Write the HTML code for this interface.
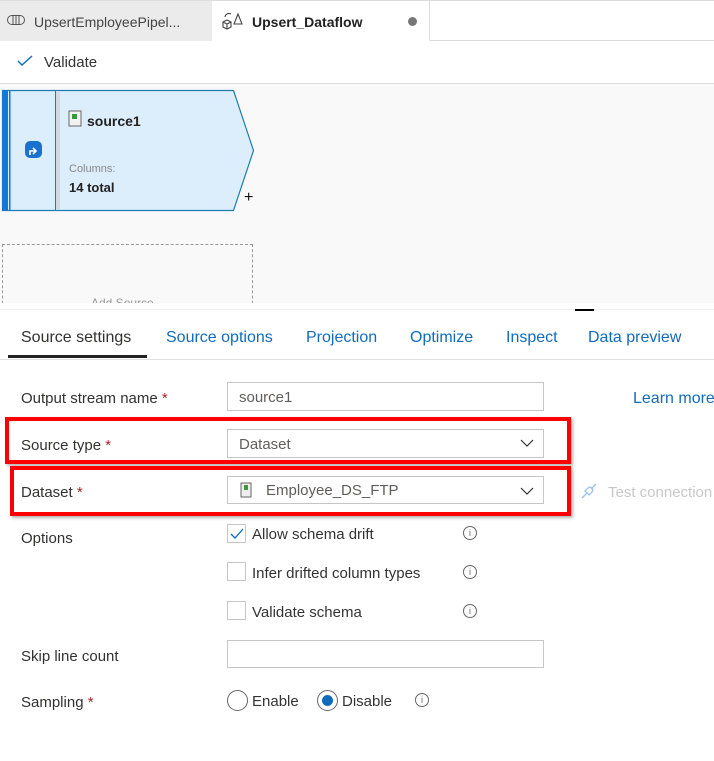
<!DOCTYPE html>
<html><head><meta charset="utf-8"><style>
*{margin:0;padding:0;box-sizing:border-box}
body{width:714px;height:761px;overflow:hidden;background:#fff;font-family:"Liberation Sans",sans-serif;color:#323130;position:relative}
.a{position:absolute;white-space:nowrap}
.lbl{font-size:15px;color:#323130}
.st{color:#a4262c}
.inp{position:absolute;border:1px solid #c8c6c4;background:#fff;font-size:15px;color:#605e5c;padding-left:11px}
.tab{font-size:16px;color:#0f6cbd;top:329px}
.cb{position:absolute;width:19px;height:19px;border:1px solid #c8c6c4;background:#fff}
.info{position:absolute;width:14px;height:14px;border:1px solid #666;border-radius:50%;font-size:9px;line-height:12px;text-align:center;color:#666}
</style></head><body>
<div class="a" style="left:0;top:0;width:714px;height:1px;background:#ddd"></div>
<div class="a" style="left:0;top:1px;width:212px;height:40px;background:#ebebeb"></div>
<div class="a" style="left:429px;top:1px;width:285px;height:40px;border-left:1px solid #ddd;border-bottom:1px solid #ddd"></div>
<svg class="a" style="left:7px;top:15px" width="18" height="10" fill="none" stroke="#555" stroke-width="1"><rect x="0.5" y="0.5" width="17" height="9" rx="4.5"/><line x1="6" y1="1" x2="6" y2="9"/><line x1="9" y1="1" x2="9" y2="9"/><line x1="12" y1="1" x2="12" y2="9"/></svg>
<div class="a" style="left:34px;top:14px;font-size:14px;color:#444">UpsertEmployeePipel...</div>
<svg class="a" style="left:221px;top:11px" width="22" height="20" viewBox="0 0 22 20" fill="none" stroke="#444" stroke-width="1.1"><path d="M2 11l4-2 4 2v5l-4 2-4-2z M2 11l4 2 4-2 M6 13v5"/><path d="M13 13l4-10 4 10z"/><path d="M4 6a4 4 0 0 1 6-3"/></svg>
<div class="a" style="left:252px;top:14px;font-size:14px;font-weight:bold;color:#222">Upsert_Dataflow</div>
<div class="a" style="left:408px;top:17px;width:9px;height:9px;border-radius:50%;background:#777"></div>
<svg class="a" style="left:17px;top:55px" width="16" height="12"><path d="M1 6l4 4 10-9" stroke="#0f6cbd" stroke-width="1.4" fill="none"/></svg>
<div class="a" style="left:44px;top:54px;font-size:15px;color:#333">Validate</div>
<div class="a" style="left:0;top:83px;width:714px;height:1px;background:#ddd"></div>
<div class="a" style="left:0;top:84px;width:714px;height:219px;background:#f9f9f9"></div>
<svg class="a" style="left:0;top:89px" width="262" height="124"><path d="M2.5 1.5H233.5L253.5 61.5L233.5 121.5H2.5Z" fill="#dcedfb" stroke="#1c7fb0" stroke-width="1.2"/><rect x="2" y="1" width="6" height="121" fill="#1478d4"/><rect x="9" y="1" width="1.5" height="121" fill="#1478d4"/><line x1="55.5" y1="2" x2="55.5" y2="121" stroke="#1c7fb0"/><rect x="56" y="2" width="4" height="119" fill="#cfdbe5"/><rect x="25" y="52" width="17" height="17" rx="5" fill="#1a72d0"/><path d="M30 66v-4h6M33 59l3 3-3 3" stroke="#fff" stroke-width="1.6" fill="none"/><rect x="69" y="22" width="12" height="15" fill="#f2f2f2" stroke="#666"/><rect x="72" y="25" width="5" height="5" fill="#3a9a3a"/></svg>
<div class="a" style="left:87px;top:113px;font-size:14px;font-weight:bold;color:#222">source1</div>
<div class="a" style="left:69px;top:163px;font-size:11px;color:#888">Columns:</div>
<div class="a" style="left:69px;top:180px;font-size:13px;font-weight:bold;color:#222">14 total</div>
<div class="a" style="left:244px;top:189px;font-size:16px;color:#111">+</div>
<div class="a" style="left:2px;top:244px;width:251px;height:70px;border:1px dashed #999"></div>
<div class="a" style="left:91px;top:296px;font-size:12px;color:#999">Add Source</div>
<div class="a" style="left:0;top:303px;width:714px;height:458px;background:#fff"></div>
<div class="a" style="left:0;top:309px;width:714px;height:1px;background:#eee"></div>
<div class="a" style="left:575px;top:309px;width:19px;height:2px;background:#000"></div>
<div class="a tab" style="left:21px;color:#323130">Source settings</div>
<div class="a tab" style="left:166px">Source options</div>
<div class="a tab" style="left:306px">Projection</div>
<div class="a tab" style="left:410px">Optimize</div>
<div class="a tab" style="left:506px">Inspect</div>
<div class="a tab" style="left:588px">Data preview</div>
<div class="a" style="left:0;top:359px;width:714px;height:1px;background:#e1e1e1"></div>
<div class="a" style="left:8px;top:355px;width:139px;height:3px;background:#222"></div>

<div class="a lbl" style="left:21px;top:390px">Output stream name <span class="st">*</span></div>
<div class="inp" style="left:227px;top:382px;width:317px;height:29px;line-height:29px">source1</div>
<div class="a" style="left:633px;top:390px;font-size:16px;color:#0f6cbd">Learn more</div>

<div class="a" style="left:5px;top:417px;width:566px;height:47px;border:4px solid #f00;box-shadow:2px 2px 3px rgba(0,0,0,.3)"></div>
<div class="a lbl" style="left:21px;top:437px">Source type <span class="st">*</span></div>
<div class="inp" style="left:227px;top:429px;width:317px;height:29px;line-height:29px">Dataset</div>
<svg class="a" style="left:520px;top:439px" width="14" height="9"><path d="M1 1l6 6 6-6" stroke="#333" stroke-width="1.2" fill="none"/></svg>

<div class="a" style="left:10px;top:466px;width:561px;height:50px;border:4px solid #f00;box-shadow:2px 2px 3px rgba(0,0,0,.3)"></div>
<div class="a lbl" style="left:21px;top:484px">Dataset <span class="st">*</span></div>
<div class="inp" style="left:227px;top:476px;width:317px;height:28px;line-height:28px;padding-left:38px">Employee_DS_FTP</div>
<svg class="a" style="left:240px;top:482px" width="12" height="16"><rect x="1" y="1" width="10" height="14" fill="#eee" stroke="#666"/><rect x="4" y="3" width="4" height="5" fill="#3a9a3a"/></svg>
<svg class="a" style="left:520px;top:487px" width="14" height="9"><path d="M1 1l6 6 6-6" stroke="#333" stroke-width="1.2" fill="none"/></svg>
<svg class="a" style="left:579px;top:481px" width="20" height="20"><path d="M3 17l5-5M12 8l5-5M6 10l4 4 3-3a2 2 0 0 0-4-4z" stroke="#9cc3ea" stroke-width="1.3" fill="none"/></svg>
<div class="a" style="left:608px;top:484px;font-size:15px;color:#c8c8c8">Test connection</div>

<div class="a lbl" style="left:21px;top:530px">Options</div>
<div class="cb" style="left:227px;top:524px"></div>
<svg class="a" style="left:230px;top:528px" width="14" height="12"><path d="M1 6l4 4 8-9" stroke="#0f6cbd" stroke-width="1.3" fill="none"/></svg>
<div class="a lbl" style="left:252px;top:526px;color:#333">Allow schema drift</div>
<div class="info" style="left:463px;top:526px">i</div>
<div class="cb" style="left:227px;top:562px"></div>
<div class="a lbl" style="left:252px;top:565px;color:#333">Infer drifted column types</div>
<div class="info" style="left:463px;top:565px">i</div>
<div class="cb" style="left:227px;top:601px"></div>
<div class="a lbl" style="left:252px;top:604px;color:#333">Validate schema</div>
<div class="info" style="left:463px;top:604px">i</div>

<div class="a lbl" style="left:21px;top:648px">Skip line count</div>
<div class="inp" style="left:227px;top:640px;width:317px;height:28px"></div>

<div class="a lbl" style="left:21px;top:694px">Sampling <span class="st">*</span></div>
<div class="a" style="left:227px;top:690px;width:21px;height:21px;border:1px solid #666;border-radius:50%"></div>
<div class="a lbl" style="left:252px;top:693px;color:#333">Enable</div>
<div class="a" style="left:317px;top:690px;width:21px;height:21px;border:1px solid #666;border-radius:50%"></div>
<div class="a" style="left:322px;top:695px;width:11px;height:11px;background:#0f6cbd;border-radius:50%"></div>
<div class="a lbl" style="left:342px;top:693px;color:#333">Disable</div>
<div class="info" style="left:415px;top:693px">i</div>
</body></html>
